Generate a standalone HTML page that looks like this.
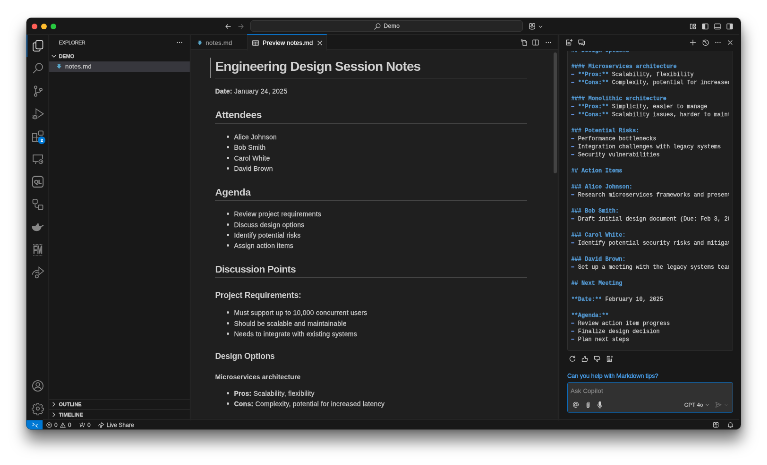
<!DOCTYPE html>
<html lang="en">
<head>
<meta charset="utf-8">
<title>Preview notes.md — Demo</title>
<style>
*{box-sizing:border-box;margin:0;padding:0}
html,body{width:767px;height:465px;overflow:hidden;background:#fff}
body{font-family:"Liberation Sans",sans-serif;position:relative}
#shadow{position:absolute;left:26.5px;top:18px;width:714.3px;height:411.3px;border-radius:5px;
  box-shadow:0 11px 15px 1px rgba(0,0,0,.52),0 2px 5px rgba(0,0,0,.22)}
#win{position:absolute;left:26px;top:17px;width:1514px;height:874px;transform:scale(0.4723);transform-origin:0 0;
  color:#ccc;font-size:13px;will-change:transform;-webkit-text-stroke:.3px}
.abs{position:absolute}
svg{display:block}
/* title bar */
#title{left:0;top:0;width:1512px;height:34px}
.tl{position:absolute;top:12.5px;width:12px;height:12px;border-radius:50%}
#cc{left:475px;top:5px;width:577px;height:24px;border-radius:6px;background:#242424;border:1px solid #3a3a3a}
/* activity bar */
#act{left:0;top:35px;width:48px;height:815px}
.ai{position:absolute;left:10.700px;width:28px;height:28px;margin-top:-2px;color:#868686}
.ai svg{width:28px;height:28px;fill:none;stroke:currentColor;stroke-width:1.5}
/* sidebar */
#side{left:48px;top:35px;width:300px;height:815px}
/* editor */
#tabs{left:348px;top:34px;width:780px;height:34px}
.tab{position:absolute;top:0;height:34px;font-size:13px;line-height:37px;white-space:nowrap}
#ed{left:348px;top:68px;width:780px;height:782px;background:#1f1f1f;overflow:hidden}
#md{position:absolute;left:52px;top:16px;width:661px;font-size:14px;line-height:22.4px;color:#ccc}
#md h1,#md h2,#md h3,#md h4{-webkit-text-stroke:0;font-weight:bold;line-height:1.25;margin:24px 0 16px;color:#d0d0d0;white-space:nowrap}
#md h1{font-size:28px;margin-top:0;padding-top:1px;padding-bottom:7.4px;border-bottom:1px solid #444;letter-spacing:-0.9px}
#md h2{font-size:21px;padding-top:2px;padding-bottom:4.3px;border-bottom:1px solid #444;letter-spacing:-0.3px}
#md h3{font-size:17.5px;position:relative;top:2.500px;letter-spacing:-0.22px}
#md h4{font-size:14px;position:relative;top:2.500px;letter-spacing:0.14px}
#md p,#md li{letter-spacing:0.27px}
#md p{margin-bottom:16px}
#md ul{margin:0 0 9.8px 0;padding-left:40px;list-style:none}
#md li{position:relative;top:1px;white-space:nowrap}
#md li:before{content:"";position:absolute;left:-15px;top:8px;width:5px;height:5px;border-radius:50%;background:#ccc}
/* aux */
#aux{left:1128px;top:35px;width:384px;height:815px;border-left:1px solid transparent}
#code{position:absolute;left:17px;top:0;width:351px;height:635px;background:#1f1f1f;border:1px solid #303030;border-top:none;border-radius:0 0 4px 4px;overflow:hidden}
#code pre{position:absolute;left:7px;top:-9px;font-family:"Liberation Mono",monospace;font-size:12px;line-height:17px;color:#d4d4d4;white-space:pre}
#code b{color:#569cd6;font-weight:bold}
#code i{color:#6796e6;font-style:normal;font-weight:bold;-webkit-text-stroke:.5px #6796e6;display:inline-block;transform:scaleX(1.6)}
#clip{position:absolute;left:0;top:0;width:342px;height:100%;overflow:hidden}

.ic{position:absolute;width:16px;height:16px;color:#ccc}
.ic svg{width:100%;height:100%;fill:none;stroke:currentColor;stroke-width:1.3;stroke-linecap:round;stroke-linejoin:round}
.t{position:absolute;white-space:nowrap}
.sh{position:absolute;left:0;width:299px;height:22px;font-size:11px;font-weight:bold;line-height:22px;color:#ccc}
#chatin{left:16.500px;top:701.500px;width:351.500px;height:64.500px;background:#313131;border:1px solid #0b69b8;border-radius:4px}
/* status */
#status{left:0;top:851.500px;width:1512px;height:20.500px;border-top:1px solid transparent;font-size:12px;line-height:21px;color:#ccc}
</style>
</head>
<body>
<div id="shadow"></div>
<svg id="frame" width="767" height="465" style="position:absolute;left:0;top:0"><defs><clipPath id="wc"><rect x="26.3" y="17.8" width="714.7" height="411.7" rx="4.7"/></clipPath></defs><rect x="26.3" y="17.8" width="714.7" height="411.7" rx="4.7" fill="#181818"/><rect x="26" y="420.1" width="16.65" height="10" fill="#0078d4" clip-path="url(#wc)"/></svg>
<div id="win"><div id="in" class="abs" style="left:0.42px;top:1.69px;width:1514px;height:873px">
  <!-- TITLE BAR -->
  <div id="title" class="abs">
    <div class="tl" style="left:12px;background:#fe5f57"></div>
    <div class="tl" style="left:32px;background:#febc2e"></div>
    <div class="tl" style="left:52px;background:#28c840"></div>
    <div id="cc" class="abs"></div>
<div class="ic" style="left:419.3px;top:10.2px;"><svg viewBox="0 0 16 16" ><path d="M13 8H3.5M7.5 3.5 3 8l4.5 4.5"/></svg></div><div class="ic" style="left:446.2px;top:10.2px;color:#6a6a6a;"><svg viewBox="0 0 16 16" ><path d="M3 8h9.5M8.5 3.5 13 8l-4.5 4.5"/></svg></div><div class="ic" style="left:735.5px;top:10.2px;"><svg viewBox="0 0 16 16" ><circle cx="9.5" cy="6.5" r="4.3"/><path d="M6.400 9.600 2 14"/></svg></div><div class="t" style="left:757px;top:9.5px;font-size:12px;line-height:16px;color:#ccc;letter-spacing:.5px">Demo</div><div class="ic" style="left:1062.5px;top:9.7px;width:17px;height:17px"><svg viewBox="0 0 16 16" ><path d="M2.500 8v3.500c0 1.300 2.500 2.500 5.500 2.500s5.500-1.200 5.500-2.500v-3.500"/><rect x="2.500" y="2.500" width="5" height="5.500" rx="2"/><rect x="8.500" y="2.500" width="5" height="5.500" rx="2"/><path d="M7.500 5h1"/><path d="M6.300 10v1.700M9.700 10v1.700" stroke-width="1.300"/></svg></div><div class="ic" style="left:1082.2px;top:12.0px;width:13px;height:13px;"><svg viewBox="0 0 16 16" ><path d="M4 6l4 4 4-4"/></svg></div><div class="ic" style="left:1403.8px;top:10.2px;"><svg viewBox="0 0 16 16" ><rect x="2.500" y="3" width="4" height="10" rx=".5"/><rect x="9.500" y="3" width="4" height="4" rx=".5"/><rect x="9.500" y="9" width="4" height="4" rx=".5"/></svg></div><div class="ic" style="left:1429.6px;top:10.2px;"><svg viewBox="0 0 16 16" ><rect x="2" y="2.500" width="12" height="11" rx="1"/><path d="M2.500 3h5v10h-5z" fill="currentColor"/></svg></div><div class="ic" style="left:1455.7px;top:10.2px;"><svg viewBox="0 0 16 16" ><rect x="2" y="2.500" width="12" height="11" rx="1"/><path d="M2 10h12"/></svg></div><div class="ic" style="left:1481.5px;top:10.2px;"><svg viewBox="0 0 16 16" ><rect x="2" y="2.500" width="12" height="11" rx="1"/><path d="M8.500 3h5v10h-5z" fill="currentColor"/></svg></div>
  </div>
  <!-- ACTIVITY BAR -->
  <div id="act" class="abs">
<div class="abs" style="left:.5px;top:0;width:2.500px;height:48px;background:#0e6fc4"></div>
<div class="ai" style="top:12px;color:#d7d7d7;"><svg viewBox="0 0 24 24" ><rect x="8.500" y="2.500" width="12.500" height="15" rx="2.500"/><path d="M8.500 6.500h-2.500a2.500 2.500 0 0 0-2.500 2.500v10a2.500 2.500 0 0 0 2.500 2.500h7.500a2.500 2.500 0 0 0 2.500-2.500v-1.500"/></svg></div>
<div class="ai" style="top:60px;"><svg viewBox="0 0 24 24" ><circle cx="14.300" cy="9.300" r="6.300"/><path d="M9.800 13.800 3.500 20.500"/></svg></div>
<div class="ai" style="top:108px;"><svg viewBox="0 0 24 24" ><circle cx="8" cy="5" r="2.300"/><circle cx="8" cy="19" r="2.300"/><circle cx="17.500" cy="9" r="2.300"/><path d="M8 7.300v9.400M17.500 11.300c0 4-9.500 2-9.500 5.400"/></svg></div>
<div class="ai" style="top:156px;"><svg viewBox="0 0 24 24" ><path d="M8.700 13v-9.900l13.300 8.900-9.500 6.300"/><circle cx="6.800" cy="18" r="3.200"/><path d="M6.800 14.800v6.400M2.500 15l1.500 1.200M2.500 21l1.500-1.200M11.100 15l-1.500 1.200M11.100 21l-1.500-1.200M2 18h1.500M10 18h1.500" stroke-width="1.200"/></svg></div>
<div class="ai" style="top:204px;"><svg viewBox="0 0 24 24" ><path d="M2.500 6.500h7.500v14.500h-7.500zM2.500 13.500h15v7.500h-7.500M10 13.500v7.500"/><rect x="13.500" y="2" width="8" height="7.500" rx="1.200"/></svg></div>
<div class="ai" style="top:252px;"><svg viewBox="0 0 24 24" ><path d="M13 16.500h-9.500v-12h17v7.500"/><path d="M7.500 20.500l1.500-4"/><circle cx="17.500" cy="16.500" r="3.500"/><path d="M16 16.500h3M17.800 15l1.500 1.500-1.500 1.500" stroke-width="1"/></svg></div>
<div class="ai" style="top:300px;"><svg viewBox="0 0 24 24" ><rect x="2.500" y="2.500" width="19" height="19" rx="3.500" stroke-width="1.800"/><text x="12" y="15.700" font-family="Liberation Sans,sans-serif" font-weight="bold" font-size="10" text-anchor="middle" fill="currentColor" stroke="currentColor" stroke-width=".5">QL</text></svg></div>
<div class="ai" style="top:348px;"><svg viewBox="0 0 24 24" ><rect x="3" y="2.500" width="8" height="8" rx="2.200"/><rect x="13" y="13" width="8" height="8" rx=".8"/><path d="M7 10.500v4c0 1.500 1 2.500 2.500 2.500h3.500"/></svg></div>
<div class="ai" style="top:396px;"><svg viewBox="0 0 24 24" ><path d="M1.300 10.300h17c.3 5-3 8.700-8.500 8.700s-8.800-3.700-8.500-8.700z" fill="currentColor" stroke="none"/><path d="M17.500 11c1.300-.3 2.200-1.300 2.400-2.700.9.400 1.800.300 2.600-.200-.400 1.300-1.300 2-2.500 2.200-.400 1-1.200 1.700-2.300 2z" fill="currentColor" stroke-width=".6"/><path d="M8.300 7.500h6v3h-6zM10.300 5.300h3.300v2.300h-3.300z" fill="currentColor" stroke="none"/></svg></div>
<div class="ai" style="top:444px;"><svg viewBox="0 0 24 24" ><text x="3.500" y="19.200" font-family="Liberation Sans,sans-serif" font-weight="bold" font-size="20" fill="currentColor" stroke="currentColor" stroke-width=".4" textLength="17" lengthAdjust="spacingAndGlyphs">FM</text><path d="M3.500 2h17M3.500 22.300h17" stroke-dasharray="1.500 1" stroke-width="1"/></svg></div>
<div class="ai" style="top:492px;"><svg viewBox="0 0 24 24" ><path d="M2 16c1-5.500 5.500-8.500 12-8.500v-5l8.500 6.800-8.500 6.800v-5c-3 0-5 .5-6.500 1.500"/><circle cx="10.200" cy="19" r="2.700"/></svg></div>
<div class="ai" style="top:732px;"><svg viewBox="0 0 24 24" ><circle cx="12" cy="12" r="9.500"/><circle cx="12" cy="9.500" r="3.300"/><path d="M5.800 19c.7-3.200 3-4.700 6.200-4.700s5.500 1.500 6.200 4.700"/></svg></div>
<div class="ai" style="top:780px;"><svg viewBox="0 0 24 24" ><circle cx="12" cy="12" r="2.800"/><path d="M10.300 2.500h3.400l.5 2.700 1.700.8 2.400-1.500 2.300 2.400-1.500 2.300.7 1.800 2.700.5v3.300l-2.700.5-.7 1.700 1.500 2.400-2.400 2.300-2.300-1.500-1.700.7-.5 2.700h-3.400l-.5-2.700-1.700-.7-2.400 1.500-2.300-2.400 1.500-2.300-.7-1.800-2.700-.5v-3.300l2.700-.5.700-1.700-1.500-2.400 2.400-2.300 2.300 1.500 1.700-.7z" stroke-width="1.300"/></svg></div>
<div class="abs" style="left:25px;top:216.500px;width:16px;height:16px;border-radius:50%;background:#0078d4;color:#fff;font-size:9px;font-weight:bold;line-height:16px;text-align:center">2</div>
</div>
  <!-- SIDEBAR -->
  <div id="side" class="abs">
<div class="t" style="left:21px;top:9px;font-size:11px;line-height:17px;color:#ccc;letter-spacing:-.5px">EXPLORER</div><div class="ic" style="left:268.4px;top:9.7px;"><svg viewBox="0 0 16 16" ><circle cx="3.500" cy="8" r="1.150" fill="currentColor" stroke="none"/><circle cx="8" cy="8" r="1.150" fill="currentColor" stroke="none"/><circle cx="12.500" cy="8" r="1.150" fill="currentColor" stroke="none"/></svg></div><div class="sh" style="top:35px"><div class="ic" style="left:2.9px;top:3.0px;"><svg viewBox="0 0 16 16" ><path d="M4 6l4 4 4-4"/></svg></div><span class="t" style="left:21px">DEMO</span></div><div class="abs" style="left:0;top:57px;width:299px;height:22px;background:#37373d"></div><div class="ic" style="left:15.9px;top:62.5px;width:12px;height:12px"><svg viewBox="0 0 16 16" ><path d="M5.500 2h5v5h3l-5.500 6.500-5.500-6.500h3z" fill="#5aa7ca" stroke="#5aa7ca" stroke-width="1.2"/><path d="M4 2.500h1.500M10.500 2.500h1.500" stroke="#519aba"/></svg></div><div class="t" style="left:34.500px;top:57.500px;font-size:13px;line-height:22px;color:#ccc;letter-spacing:.34px">notes.md</div><div class="sh" style="top:771px;border-top:1px solid transparent"><div class="ic" style="left:2.9px;top:3.0px;"><svg viewBox="0 0 16 16" ><path d="M6 4l4 4-4 4"/></svg></div><span class="t" style="left:21px">OUTLINE</span></div><div class="sh" style="top:793px;border-top:1px solid transparent"><div class="ic" style="left:2.9px;top:3.0px;"><svg viewBox="0 0 16 16" ><path d="M6 4l4 4-4 4"/></svg></div><span class="t" style="left:21px">TIMELINE</span></div>
</div>
  <!-- TABS -->
  <div id="tabs" class="abs">
<div class="tab" style="left:0;width:120px;color:#9d9d9d"><div class="ic" style="left:14.0px;top:13.0px;width:12px;height:12px"><svg viewBox="0 0 16 16" ><path d="M5.500 2h5v5h3l-5.500 6.500-5.500-6.500h3z" fill="#5aa7ca" stroke="#5aa7ca" stroke-width="1.2"/><path d="M4 2.500h1.500M10.500 2.500h1.500" stroke="#519aba"/></svg></div><span class="t" style="left:32px;letter-spacing:.35px">notes.md</span></div><div class="tab" style="left:120px;width:169px;background:#1f1f1f;border-top:1px solid transparent;height:35px;color:#fff"><div class="ic" style="left:9.9px;top:10px;color:#c5c5c5;"><svg viewBox="0 0 16 16" ><rect x="1.500" y="3" width="13" height="10" rx="1"/><path d="M1.500 6h13M8 6v7"/><path d="M3.500 8.500h2.500M3.500 10.500h2.500M10 8.500h2.500M10 10.500h2.500" stroke-width=".9"/></svg></div><span class="t" style="left:32.500px;top:-1px;letter-spacing:.2px">Preview notes.md</span><div class="ic" style="left:145.9px;top:10px;color:#ddd;"><svg viewBox="0 0 16 16" ><path d="M4 4l8 8M12 4l-8 8"/></svg></div></div><div class="ic" style="left:697.4px;top:9.9px;"><svg viewBox="0 0 16 16" ><path d="M6 3.500h5l3 3v7.500h-8z"/><path d="M10.500 3.500v3.500h3.500"/><path d="M4.500 6.500a3 3 0 0 1 0-4.500M4.500 2l-2.300.3M4.500 2l-.3 2.300" /></svg></div><div class="ic" style="left:722.8px;top:9.9px;"><svg viewBox="0 0 16 16" ><rect x="2" y="2.500" width="12" height="11" rx="1"/><path d="M8 2.500v11"/></svg></div><div class="ic" style="left:749.2px;top:9.9px;"><svg viewBox="0 0 16 16" ><circle cx="3.500" cy="8" r="1.150" fill="currentColor" stroke="none"/><circle cx="8" cy="8" r="1.150" fill="currentColor" stroke="none"/><circle cx="12.500" cy="8" r="1.150" fill="currentColor" stroke="none"/></svg></div>
</div>
  <!-- EDITOR -->
  <div id="ed" class="abs">
    <div class="abs" style="left:769px;top:5px;width:7px;height:256px;border-radius:4px;background:#434343"></div>
    <div class="abs" style="left:41px;top:16px;width:3px;height:43px;background:#858585"></div>
    <div id="md">
      <h1>Engineering Design Session Notes</h1>
      <p><b>Date:</b> January 24, 2025</p>
      <h2>Attendees</h2>
      <ul><li>Alice Johnson</li><li>Bob Smith</li><li>Carol White</li><li>David Brown</li></ul>
      <h2>Agenda</h2>
      <ul><li>Review project requirements</li><li>Discuss design options</li><li>Identify potential risks</li><li>Assign action items</li></ul>
      <h2 style="letter-spacing:-.68px">Discussion Points</h2>
      <h3>Project Requirements:</h3>
      <ul><li>Must support up to 10,000 concurrent users</li><li>Should be scalable and maintainable</li><li>Needs to integrate with existing systems</li></ul>
      <h3>Design Options</h3>
      <h4>Microservices architecture</h4>
      <ul><li><b>Pros:</b> Scalability, flexibility</li><li><b>Cons:</b> Complexity, potential for increased latency</li></ul>
    </div>
  </div>
  <!-- AUX BAR -->
  <div id="aux" class="abs">
<div class="ic" style="left:11.8px;top:9.5px;"><svg viewBox="0 0 16 16" ><path d="M9 2.500h-5.500v11h9v-5.500"/><path d="M6 8h4M6 10.500h4"/><path d="M13.500 1.500v4M11.500 3.500h4"/></svg></div><div class="ic" style="left:38.7px;top:9.5px;"><svg viewBox="0 0 16 16" ><path d="M2 2.500h9.500v7h-5l-2.500 2.500v-2.500h-2z"/><path d="M13.500 5.500h1v6.500h-1.500v2l-2-2h-4"/></svg></div><div class="ic" style="left:274.5px;top:9.5px;"><svg viewBox="0 0 16 16" ><path d="M8 2.500v11M2.500 8h11"/></svg></div><div class="ic" style="left:301.2px;top:9.5px;"><svg viewBox="0 0 16 16" ><path d="M3 5a6 6 0 1 1-1 3.500"/><path d="M2.500 2.500v3h3M8 5v3.500l2.500 1.500"/></svg></div><div class="ic" style="left:327.7px;top:9.5px;"><svg viewBox="0 0 16 16" ><circle cx="3.500" cy="8" r="1.150" fill="currentColor" stroke="none"/><circle cx="8" cy="8" r="1.150" fill="currentColor" stroke="none"/><circle cx="12.500" cy="8" r="1.150" fill="currentColor" stroke="none"/></svg></div><div class="ic" style="left:353.5px;top:9.5px;"><svg viewBox="0 0 16 16" ><path d="M4 4l8 8M12 4l-8 8"/></svg></div>
    <div id="auxbody" class="abs" style="left:0;top:35px;width:383px;height:780px">
<div class="ic" style="left:19.6px;top:644.2px;"><svg viewBox="0 0 16 16" ><path d="M12.500 4.500a5.500 5.500 0 1 0 1 3.500"/><path d="M13 1.500v3.500h-3.500"/></svg></div><div class="ic" style="left:45.7px;top:644.2px;"><svg viewBox="0 0 16 16" ><path d="M2.500 7.500h3l2.500-5c1.500 0 2 1 1.500 2.500l-.5 2h4c.8 0 1.200.7 1 1.500l-1.200 4c-.2.600-.7 1-1.300 1h-9z"/></svg></div><div class="ic" style="left:71.7px;top:644.2px;"><svg viewBox="0 0 16 16" ><path d="M2.500 8.500h3l2.500 5c1.500 0 2-1 1.500-2.500l-.5-2h4c.8 0 1.200-.7 1-1.500l-1.200-4c-.2-.600-.7-1-1.300-1h-9z"/></svg></div><div class="ic" style="left:98.0px;top:644.2px;"><svg viewBox="0 0 16 16" ><path d="M9 2.500h-5.500v11h9v-5.500"/><path d="M6 6h2.500M6 8.500h4M6 11h4"/><path d="M13.500 1.500v4M11.500 3.500h4"/></svg></div><div class="t" style="left:16.500px;top:679px;font-size:13px;line-height:17px;color:#4daafc;letter-spacing:-.17px">Can you help with Markdown tips?</div><div id="chatin" class="abs"><div class="abs" style="left:.5px;top:2.5px"><div class="t" style="left:5.500px;top:6px;font-size:13px;line-height:18px;color:#8b8b8b;letter-spacing:.3px">Ask Copilot</div><div class="ic" style="left:8.2px;top:36.4px;"><svg viewBox="0 0 16 16" ><circle cx="8" cy="8" r="2.500"/><path d="M10.500 5.500v3.500c0 1.200 1 1.700 1.800 1.300 1-.5 1.400-1.700 1.200-3.300a5.500 5.500 0 1 0-2.500 5.500"/></svg></div><div class="ic" style="left:34.2px;top:36.4px;"><svg viewBox="0 0 16 16" ><path d="M5.500 5v6.500a2.500 2.500 0 0 0 5 0v-7.500a1.700 1.700 0 0 0-3.400 0v7a.8.8 0 0 0 1.700 0v-5.500" stroke-width="1.300"/></svg></div><div class="ic" style="left:59.8px;top:36.4px;"><svg viewBox="0 0 16 16" ><rect x="6" y="1.500" width="4" height="8" rx="2" fill="currentColor"/><path d="M3.500 8a4.500 4.500 0 0 0 9 0M8 12.500v2M6 14.500h4"/></svg></div><div class="t" style="left:246.3px;top:37.4px;font-size:11px;line-height:14px;color:#ccc;letter-spacing:.4px">GPT 4o</div><div class="ic" style="left:289.5px;top:39.1px;width:11px;height:11px;"><svg viewBox="0 0 16 16" ><path d="M4 6l4 4 4-4"/></svg></div><div class="ic" style="left:310.7px;top:36.4px;color:#6b6b6b;"><svg viewBox="0 0 16 16" ><path d="M2.500 2.500l11.500 5.500-11.500 5.500 1.500-5.500zM4 8h6"/></svg></div><div class="ic" style="left:329.5px;top:39.1px;width:11px;height:11px;color:#6b6b6b;"><svg viewBox="0 0 16 16" ><path d="M4 6l4 4 4-4"/></svg></div></div></div>
      <div id="code"><div id="clip"><pre><b>## Design Options</b>

<b>#### Microservices architecture</b>
<i>-</i> <b>**Pros:**</b> Scalability, flexibility
<i>-</i> <b>**Cons:**</b> Complexity, potential for increased latency

<b>#### Monolithic architecture</b>
<i>-</i> <b>**Pros:**</b> Simplicity, easier to manage
<i>-</i> <b>**Cons:**</b> Scalability issues, harder to maintain

<b>### Potential Risks:</b>
<i>-</i> Performance bottlenecks
<i>-</i> Integration challenges with legacy systems
<i>-</i> Security vulnerabilities

<b>## Action Items</b>

<b>### Alice Johnson:</b>
<i>-</i> Research microservices frameworks and present findings
 
<b>### Bob Smith:</b>
<i>-</i> Draft initial design document (Due: Feb 3, 2025)

<b>### Carol White:</b>
<i>-</i> Identify potential security risks and mitigation plans

<b>### David Brown:</b>
<i>-</i> Set up a meeting with the legacy systems team

<b>## Next Meeting</b>

<b>**Date:**</b> February 10, 2025

<b>**Agenda:**</b>
<i>-</i> Review action item progress
<i>-</i> Finalize design decision
<i>-</i> Plan next steps</pre></div></div>
    </div>
  </div>
  <!-- STATUS BAR -->
  <div id="status" class="abs">
<div class="ic" style="left:11.0px;top:1.5px;color:#fff;"><svg viewBox="0 0 16 16" ><path d="M3 3.500l3.500 3-3.500 3M13 6.500l-3.500 3 3.500 3" stroke-width="1.300"/></svg></div><div class="ic" style="left:41.9px;top:2.5px;width:14px;height:14px;"><svg viewBox="0 0 16 16" ><circle cx="8" cy="8" r="6"/><path d="M5.700 5.700l4.600 4.600M10.300 5.700l-4.600 4.600"/></svg></div><div class="t" style="left:59.500px;top:-0.5px">0</div><div class="ic" style="left:70.9px;top:2.5px;width:14px;height:14px;"><svg viewBox="0 0 16 16" ><path d="M8 2.500l6 11h-12z"/><path d="M8 7v3M8 11.500v.5"/></svg></div><div class="t" style="left:88.500px;top:-0.5px">0</div><div class="ic" style="left:112.0px;top:2.5px;width:14px;height:14px;"><svg viewBox="0 0 16 16" ><path d="M2.500 3.500l2 9 3.500-6 3.500 6 2-9" /><circle cx="8" cy="3.500" r="1.200"/></svg></div><div class="t" style="left:129.500px;top:-0.5px">0</div><div class="ic" style="left:151.8px;top:2.5px;width:14px;height:14px;"><svg viewBox="0 0 16 16" ><path d="M2 10c.7-3.300 3.300-5 7-5v-3l5.500 4.500-5.500 4.500v-3c-1.700 0-2.700.2-3.700.9"/><circle cx="7.300" cy="12.500" r="1.800"/></svg></div><div class="t" style="left:170px;top:-0.5px;letter-spacing:.1px">Live Share</div><div class="ic" style="left:1453.0px;top:2.0px;width:15px;height:15px;"><svg viewBox="0 0 16 16" ><path d="M2.500 8v3.500c0 1.300 2.500 2.500 5.500 2.500s5.500-1.200 5.500-2.500v-3.500"/><rect x="2.500" y="2.500" width="5" height="5.500" rx="2"/><rect x="8.500" y="2.500" width="5" height="5.500" rx="2"/><path d="M7.500 5h1"/><path d="M6.300 10v1.700M9.700 10v1.700" stroke-width="1.300"/></svg></div><div class="ic" style="left:1483.3px;top:2.0px;width:15px;height:15px;"><svg viewBox="0 0 16 16" ><path d="M4 11.500v-4.500a4 4 0 0 1 8 0v4.500l1.500 1h-11zM6.500 14h3"/></svg></div>
</div>
<div id="lines">
<div class="abs" style="left:2px;top:34.37px;width:1508px;height:2.1px;background:#262626"></div>
<div class="abs" style="left:46.22px;top:36px;width:2.1px;height:816px;background:#262626"></div>
<div class="abs" style="left:346.88px;top:36px;width:2.1px;height:816px;background:#262626"></div>
<div class="abs" style="left:1126.05px;top:36px;width:2.1px;height:816px;background:#262626"></div>
<div class="abs" style="left:348px;top:66.13px;width:120px;height:2.1px;background:#262626"></div>
<div class="abs" style="left:637px;top:66.13px;width:491px;height:2.1px;background:#262626"></div>
<div class="abs" style="left:467.57px;top:36px;width:2.1px;height:33px;background:#262626"></div>
<div class="abs" style="left:634.83px;top:36px;width:2.1px;height:33px;background:#262626"></div>
<div class="abs" style="left:468px;top:34.37px;width:169px;height:2.1px;background:#0b6fc2"></div>
<div class="abs" style="left:49px;top:807.18px;width:298px;height:2.1px;background:#262626"></div>
<div class="abs" style="left:49px;top:828.35px;width:298px;height:2.1px;background:#262626"></div>
<div class="abs" style="left:36px;top:849.53px;width:1474px;height:2.1px;background:#262626"></div>
</div>
</div></div>
</body>
</html>
